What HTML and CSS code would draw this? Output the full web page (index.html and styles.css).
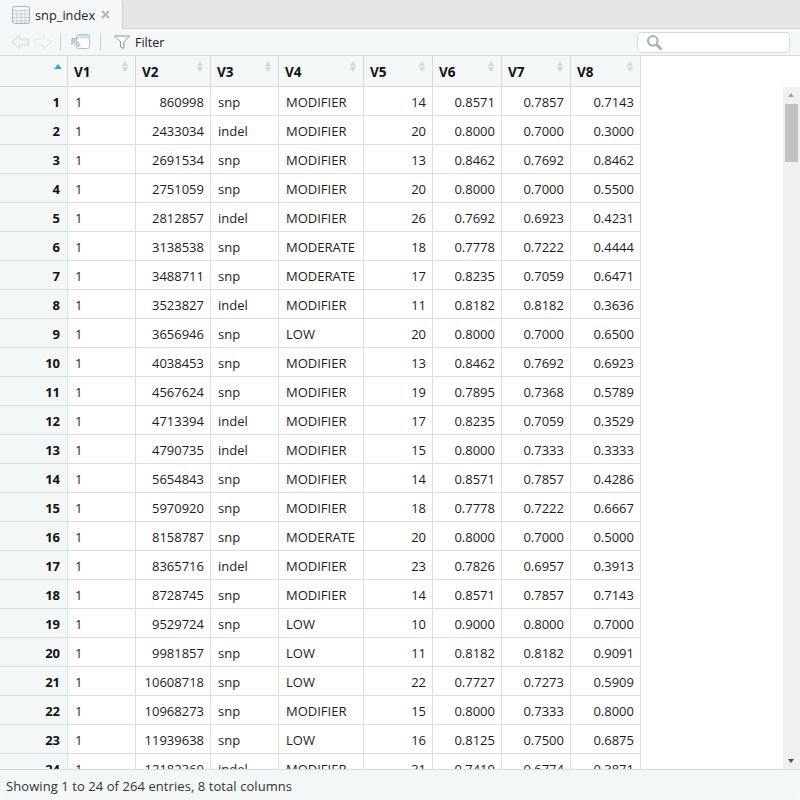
FILE: index.html
```html
<!DOCTYPE html>
<html lang="en">
<head>
<meta charset="utf-8">
<title>snp_index</title>
<link rel="stylesheet" href="styles.css">
</head>
<body>
<div class="app">
  <div class="tabbar">
    <div class="tab">
      <svg class="tab-icon" width="20" height="20" viewBox="0 0 20 20"><rect x="1.500" y="1.500" width="17" height="17" rx="2" fill="#f4f7fa" stroke="#a9b4be"/><path d="M1.500 5.500h17M2 9h16M2 12.500h16M2 16h16M6 5.500V18M10 5.500V18M14 5.500V18" fill="none" stroke="#c3cdd6"/></svg>
      <span class="tab-label">snp_index</span>
      <svg class="tab-close" width="9" height="9" viewBox="0 0 9 9"><path d="M1 1l7 7M8 1L1 8" stroke="#b4b8bc" stroke-width="2.200"/></svg>
    </div>
  </div>
  <div class="toolbar">
    <svg class="nav" width="41" height="18" viewBox="0 0 41 18"><path d="M.8 9L8.500 2.500V6h9v6h-9v3.500z" fill="#f1f3f4" stroke="#d4d8da"/><path d="M40.200 9L32.500 2.500V6h-9v6h9v3.500z" fill="#f6f7f8" stroke="#e2e5e6"/></svg>
    <span class="sep"></span>
    <svg class="popout" width="20" height="18" viewBox="0 0 20 18"><rect x="5.500" y="1.500" width="13" height="14" rx="2" fill="#fff" stroke="#b9c0c6"/><path d="M6 2h12v3.500H6z" fill="#cfe0f1"/><path d="M1 5.500h5.500l-1.700 1.700 4.500 4.500-2.400 2.400-4.500-4.500L.7 11.300z" fill="#d0d4d7" stroke="#a7aeb3" stroke-width=".8"/></svg>
    <span class="sep sep-b"></span>
    <svg class="funnel" width="16" height="15" viewBox="0 0 16 15"><path d="M.5 1h15L9.800 7v6.500l-3.300-1.500V7z" fill="#fff" stroke="#8f969b"/></svg>
    <span class="filter">Filter</span>
    <div class="search">
      <svg width="17" height="17" viewBox="0 0 17 17"><circle cx="6.800" cy="6.800" r="4.800" fill="none" stroke="#a9b2b8" stroke-width="2.200"/><path d="M10.500 10.500l5 5" stroke="#a9b2b8" stroke-width="3"/></svg>
    </div>
  </div>
  <div class="main">
    <div class="grid-wrap">
      <table class="grid">
        <colgroup>
          <col class="c0"><col class="c1"><col class="c2"><col class="c3"><col class="c4"><col class="c5"><col class="c6"><col class="c7"><col class="c8">
        </colgroup>
        <thead>
          <tr>
            <th class="idx-head"><span class="sort-up"></span></th>
            <th>V1<span class="sorter"></span></th>
            <th>V2<span class="sorter"></span></th>
            <th>V3<span class="sorter"></span></th>
            <th>V4<span class="sorter"></span></th>
            <th>V5<span class="sorter"></span></th>
            <th>V6<span class="sorter"></span></th>
            <th>V7<span class="sorter"></span></th>
            <th>V8<span class="sorter"></span></th>
          </tr>
        </thead>
        <tbody>
          <tr><td class="idx">1</td><td>1</td><td class="n">860998</td><td>snp</td><td>MODIFIER</td><td class="n">14</td><td class="n">0.8571</td><td class="n">0.7857</td><td class="n">0.7143</td></tr>
          <tr><td class="idx">2</td><td>1</td><td class="n">2433034</td><td>indel</td><td>MODIFIER</td><td class="n">20</td><td class="n">0.8000</td><td class="n">0.7000</td><td class="n">0.3000</td></tr>
          <tr><td class="idx">3</td><td>1</td><td class="n">2691534</td><td>snp</td><td>MODIFIER</td><td class="n">13</td><td class="n">0.8462</td><td class="n">0.7692</td><td class="n">0.8462</td></tr>
          <tr><td class="idx">4</td><td>1</td><td class="n">2751059</td><td>snp</td><td>MODIFIER</td><td class="n">20</td><td class="n">0.8000</td><td class="n">0.7000</td><td class="n">0.5500</td></tr>
          <tr><td class="idx">5</td><td>1</td><td class="n">2812857</td><td>indel</td><td>MODIFIER</td><td class="n">26</td><td class="n">0.7692</td><td class="n">0.6923</td><td class="n">0.4231</td></tr>
          <tr><td class="idx">6</td><td>1</td><td class="n">3138538</td><td>snp</td><td>MODERATE</td><td class="n">18</td><td class="n">0.7778</td><td class="n">0.7222</td><td class="n">0.4444</td></tr>
          <tr><td class="idx">7</td><td>1</td><td class="n">3488711</td><td>snp</td><td>MODERATE</td><td class="n">17</td><td class="n">0.8235</td><td class="n">0.7059</td><td class="n">0.6471</td></tr>
          <tr><td class="idx">8</td><td>1</td><td class="n">3523827</td><td>indel</td><td>MODIFIER</td><td class="n">11</td><td class="n">0.8182</td><td class="n">0.8182</td><td class="n">0.3636</td></tr>
          <tr><td class="idx">9</td><td>1</td><td class="n">3656946</td><td>snp</td><td>LOW</td><td class="n">20</td><td class="n">0.8000</td><td class="n">0.7000</td><td class="n">0.6500</td></tr>
          <tr><td class="idx">10</td><td>1</td><td class="n">4038453</td><td>snp</td><td>MODIFIER</td><td class="n">13</td><td class="n">0.8462</td><td class="n">0.7692</td><td class="n">0.6923</td></tr>
          <tr><td class="idx">11</td><td>1</td><td class="n">4567624</td><td>snp</td><td>MODIFIER</td><td class="n">19</td><td class="n">0.7895</td><td class="n">0.7368</td><td class="n">0.5789</td></tr>
          <tr><td class="idx">12</td><td>1</td><td class="n">4713394</td><td>indel</td><td>MODIFIER</td><td class="n">17</td><td class="n">0.8235</td><td class="n">0.7059</td><td class="n">0.3529</td></tr>
          <tr><td class="idx">13</td><td>1</td><td class="n">4790735</td><td>indel</td><td>MODIFIER</td><td class="n">15</td><td class="n">0.8000</td><td class="n">0.7333</td><td class="n">0.3333</td></tr>
          <tr><td class="idx">14</td><td>1</td><td class="n">5654843</td><td>snp</td><td>MODIFIER</td><td class="n">14</td><td class="n">0.8571</td><td class="n">0.7857</td><td class="n">0.4286</td></tr>
          <tr><td class="idx">15</td><td>1</td><td class="n">5970920</td><td>snp</td><td>MODIFIER</td><td class="n">18</td><td class="n">0.7778</td><td class="n">0.7222</td><td class="n">0.6667</td></tr>
          <tr><td class="idx">16</td><td>1</td><td class="n">8158787</td><td>snp</td><td>MODERATE</td><td class="n">20</td><td class="n">0.8000</td><td class="n">0.7000</td><td class="n">0.5000</td></tr>
          <tr><td class="idx">17</td><td>1</td><td class="n">8365716</td><td>indel</td><td>MODIFIER</td><td class="n">23</td><td class="n">0.7826</td><td class="n">0.6957</td><td class="n">0.3913</td></tr>
          <tr><td class="idx">18</td><td>1</td><td class="n">8728745</td><td>snp</td><td>MODIFIER</td><td class="n">14</td><td class="n">0.8571</td><td class="n">0.7857</td><td class="n">0.7143</td></tr>
          <tr><td class="idx">19</td><td>1</td><td class="n">9529724</td><td>snp</td><td>LOW</td><td class="n">10</td><td class="n">0.9000</td><td class="n">0.8000</td><td class="n">0.7000</td></tr>
          <tr><td class="idx">20</td><td>1</td><td class="n">9981857</td><td>snp</td><td>LOW</td><td class="n">11</td><td class="n">0.8182</td><td class="n">0.8182</td><td class="n">0.9091</td></tr>
          <tr><td class="idx">21</td><td>1</td><td class="n">10608718</td><td>snp</td><td>LOW</td><td class="n">22</td><td class="n">0.7727</td><td class="n">0.7273</td><td class="n">0.5909</td></tr>
          <tr><td class="idx">22</td><td>1</td><td class="n">10968273</td><td>snp</td><td>MODIFIER</td><td class="n">15</td><td class="n">0.8000</td><td class="n">0.7333</td><td class="n">0.8000</td></tr>
          <tr><td class="idx">23</td><td>1</td><td class="n">11939638</td><td>snp</td><td>LOW</td><td class="n">16</td><td class="n">0.8125</td><td class="n">0.7500</td><td class="n">0.6875</td></tr>
          <tr><td class="idx">24</td><td>1</td><td class="n">12182360</td><td>indel</td><td>MODIFIER</td><td class="n">31</td><td class="n">0.7419</td><td class="n">0.6774</td><td class="n">0.3871</td></tr>
        </tbody>
      </table>
    </div>
    <div class="scroll-col">
      <div class="scrollbar">
        <span class="arrow-up"></span>
        <div class="track"><div class="thumb"></div></div>
        <span class="arrow-down"></span>
      </div>
    </div>
  </div>
  <div class="status">Showing 1 to 24 of 264 entries, 8 total columns</div>
</div>
</body>
</html>
```
FILE: styles.css
```css
* { box-sizing: border-box; }
html, body { margin: 0; padding: 0; height: 100%; }
body {
  background: #fff;
  font-family: "Open Sans", "Noto Sans", sans-serif;
  font-size: 13px;
  color: #1a1a1a;
  overflow: hidden;
}
.app { width: 800px; height: 800px; display: flex; flex-direction: column; }
.tabbar {
  height: 29px;
  flex: none;
  background: #e4e6e8;
  display: flex;
  align-items: flex-start;
  border-bottom: 1px solid #d4d8da;
}
.tab {
  width: 123px;
  height: 29px;
  padding-left: 11px;
  display: flex;
  align-items: center;
  gap: 4px;
  background: #f4f6f8;
  border-right: 1px solid #cfd3d6;
  border-top-right-radius: 2px;
}
.tab-label { font-size: 12.8px; color: #222; }
.tab-close { margin-left: 2px; }
.tab-icon { flex: none; }
.toolbar {
  height: 27px;
  flex: none;
  background: #f4f7f8;
  border-bottom: 1px solid #d6dadc;
  display: flex;
  align-items: center;
  padding-left: 11px;
  padding-right: 10px;
}
.nav { flex: none; }
.sep { width: 1px; height: 17px; background: #ccd1d4; margin-left: 8px; margin-right: 10px; flex: none; }
.sep-b { margin-left: 9px; margin-right: 13px; }
.popout { flex: none; }
.funnel { flex: none; }
.filter { margin-left: 5px; font-size: 12.5px; color: #222; }
.search {
  margin-left: auto;
  width: 153px;
  height: 21px;
  background: #fff;
  border: 1px solid #d4d9dc;
  border-radius: 4px;
  display: flex;
  align-items: center;
  padding-left: 8px;
}
.main { flex: 1; min-height: 0; display: flex; }
.grid-wrap { width: 641px; flex: none; overflow: hidden; }
.grid { table-layout: fixed; width: 641px; border-collapse: separate; border-spacing: 0; }
.c0 { width: 68px; }
.c1 { width: 68px; }
.c2 { width: 75px; }
.c3 { width: 68px; }
.c4 { width: 85px; }
.c5 { width: 69px; }
.c6 { width: 69px; }
.c7 { width: 69px; }
.c8 { width: 70px; }
.grid th {
  height: 31px;
  padding: 2px 6px 0 6px;
  position: relative;
  text-align: left;
  font-weight: 700;
  font-size: 13.5px;
  color: #111;
  background: #f4f7f8;
  border-right: 1px solid #d6dadc;
  border-bottom: 1px solid #d6dadc;
}
.grid td {
  height: 29px;
  padding: 2px 6px 0 7px;
  white-space: nowrap;
  overflow: hidden;
  border-right: 1px solid #dcdfe1;
  border-bottom: 1px solid #dcdfe1;
  color: #1c1c1c;
}
.grid td.n { text-align: right; }
.grid td.idx {
  text-align: right;
  font-weight: 700;
  color: #111;
  padding-right: 7px;
  background: #f4f7f8;
}
.sorter {
  position: absolute;
  right: 6px;
  top: 5px;
  width: 7px;
  height: 11px;
}
.sorter::before, .sorter::after {
  content: "";
  position: absolute;
  left: 0;
  border-left: 3.5px solid transparent;
  border-right: 3.5px solid transparent;
}
.sorter::before { top: 0; border-bottom: 5px solid #d3d6d8; }
.sorter::after { bottom: 0; border-top: 5px solid #d3d6d8; }
.sort-up {
  position: absolute;
  right: 5px;
  top: 8px;
  border-left: 4.5px solid transparent;
  border-right: 4.5px solid transparent;
  border-bottom: 5px solid #3f9fe0;
}
.scroll-col { flex: 1; display: flex; justify-content: flex-end; padding-top: 31px; }
.scrollbar {
  width: 17px;
  background: #f0f0f0;
  display: flex;
  flex-direction: column;
  align-items: center;
}
.arrow-up, .arrow-down {
  flex: none;
  width: 17px;
  height: 17px;
  position: relative;
}
.arrow-up::after, .arrow-down::after {
  content: "";
  position: absolute;
  left: 5px;
  border-left: 3.5px solid transparent;
  border-right: 3.5px solid transparent;
}
.arrow-up::after { top: 6px; border-bottom: 4px solid #a3a3a3; }
.arrow-down::after { top: 7px; border-top: 4px solid #505050; }
.track { flex: 1; width: 100%; padding: 0 2px; }
.thumb { height: 58px; background: #c1c1c1; }
.status {
  height: 31px;
  flex: none;
  background: #f4f7f8;
  border-top: 1px solid #d6dadc;
  padding-left: 6px;
  padding-top: 8px;
  line-height: 17px;
  font-size: 13px;
  letter-spacing: .07px;
  color: #333;
  border-radius: 0 0 6px 6px;
}
```
